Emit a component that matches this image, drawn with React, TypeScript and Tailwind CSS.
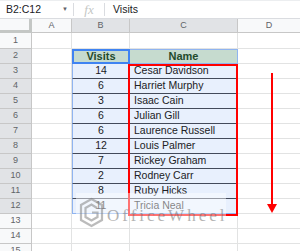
import React from "react";

const rows: [number, string][] = [
  [14, "Cesar Davidson"],
  [6, "Harriet Murphy"],
  [3, "Isaac Cain"],
  [6, "Julian Gill"],
  [6, "Laurence Russell"],
  [12, "Louis Palmer"],
  [7, "Rickey Graham"],
  [2, "Rodney Carr"],
  [8, "Ruby Hicks"],
  [11, "Tricia Neal"],
];

function RowNum({ n, sel, h }: { n: number; sel?: boolean; h: string }) {
  return (
    <div
      className={`w-[32px] shrink-0 ${h} flex items-center justify-center border-r border-b border-[#c7c7c7] text-[9px] text-[#5f6368] ${
        sel ? "bg-[#e1e3e6]" : "bg-[#f8f9fa]"
      }`}
    >
      {n}
    </div>
  );
}

export default function App() {
  return (
    <div
      className="relative w-[300px] h-[251px] overflow-hidden bg-white"
      style={{ fontFamily: '"Liberation Sans", Arial, sans-serif' }}
    >
      {/* formula bar */}
      <div className="h-[19px] flex items-center border-b border-[#dadce0] border-t border-t-[#eceef0]">
        <div className="w-[73px] flex items-center justify-between pl-[6px] pr-[5px] text-[10.5px] text-[#202124]">
          <span>B2:C12</span>
          <span className="text-[6px] text-[#5f6368]">▼</span>
        </div>
        <div className="w-px h-[13px] bg-[#dadce0]" />
        <div className="w-[30px] flex justify-center">
          <span
            className="italic text-[13px] text-[#c4c7c5] leading-none"
            style={{ fontFamily: '"Liberation Serif", serif' }}
          >
            fx
          </span>
        </div>
        <div className="w-px h-[13px] bg-[#dadce0]" />
        <span className="pl-[8px] text-[10.5px] text-[#202124]">Visits</span>
      </div>

      {/* column header */}
      <div className="flex h-[14px]">
        <div className="w-[32px] shrink-0 bg-[#f8f9fa] border-r-[3px] border-b-[3px] border-[#c4c7c5]" />
        <div className="w-[40px] shrink-0 bg-[#f8f9fa] border-r border-b border-[#c7c7c7] flex items-center justify-center text-[9px] text-[#5f6368]">
          A
        </div>
        <div className="w-[58px] shrink-0 bg-[#e1e3e6] border-r border-b border-[#c7c7c7] flex items-center justify-center text-[9px] text-[#5f6368]">
          B
        </div>
        <div className="w-[108px] shrink-0 bg-[#e1e3e6] border-r border-b border-[#c7c7c7] flex items-center justify-center text-[9px] text-[#5f6368]">
          C
        </div>
        <div className="flex-1 bg-[#f8f9fa] border-b border-[#c7c7c7] flex items-center justify-center text-[9px] text-[#5f6368]">
          D
        </div>
      </div>

      {/* row 1 */}
      <div className="flex">
        <RowNum n={1} h="h-[16px]" />
        <div className="w-[40px] h-[16px] border-r border-b border-[#e2e3e3]" />
        <div className="w-[58px] h-[16px] border-r border-b border-[#e2e3e3]" />
        <div className="w-[108px] h-[16px] border-r border-b border-[#e2e3e3]" />
        <div className="flex-1 h-[16px] border-b border-[#e2e3e3]" />
      </div>

      {/* row 2 header */}
      <div className="flex">
        <RowNum n={2} sel h="h-[15px]" />
        <div className="w-[40px] h-[15px] border-r border-b border-[#e2e3e3]" />
        <div className="w-[58px] h-[15px] bg-[#c6dbcf] border-2 border-[#3f83f2] flex items-center justify-center text-[11px] font-bold text-[#234a2c]">
          Visits
        </div>
        <div className="w-[108px] h-[15px] bg-[#c6dbcf] border-t border-r border-b border-[#8fb4f0] flex items-center justify-center text-[11px] font-bold text-[#234a2c]">
          Name
        </div>
        <div className="flex-1 h-[15px] border-b border-[#e2e3e3]" />
      </div>

      {rows.map(([v, name], i) => {
        const last = i === rows.length - 1;
        return (
          <div className="flex" key={name}>
            <RowNum n={i + 3} sel h="h-[15px]" />
            <div className="w-[40px] h-[15px] border-r border-b border-[#e2e3e3]" />
            <div
              className={`w-[58px] h-[15px] bg-[#e8f0fd] border-l border-[#8fb4f0] border-r border-r-[#434a5a] border-b flex items-center justify-center text-[10.5px] text-[#202124] ${
                last ? "border-b-[#8fb4f0]" : "border-b-[#434a5a]"
              }`}
            >
              {v}
            </div>
            <div
              className={`w-[108px] h-[15px] bg-[#e8f0fd] border-r border-[#8fb4f0] border-b flex items-center pl-[4px] text-[10.5px] text-[#202124] ${
                last ? "border-b-[#8fb4f0]" : "border-b-[#434a5a]"
              }`}
            >
              {name}
            </div>
            <div className="flex-1 h-[15px] border-b border-[#e2e3e3]" />
          </div>
        );
      })}

      {[13, 14, 15].map((n) => (
        <div className="flex" key={n}>
          <RowNum n={n} h="h-[15px]" />
          <div className="w-[40px] h-[15px] border-r border-b border-[#e2e3e3]" />
          <div className="w-[58px] h-[15px] border-r border-b border-[#e2e3e3]" />
          <div className="w-[108px] h-[15px] border-r border-b border-[#e2e3e3]" />
          <div className="flex-1 h-[15px] border-b border-[#e2e3e3]" />
        </div>
      ))}

      {/* red rectangle around names */}
      <div className="absolute left-[128px] top-[64px] w-[110px] h-[152px] border-2 border-[#ff0000]" />

      {/* red arrow */}
      <div className="absolute left-[271px] top-[73px] w-[2px] h-[133px] bg-[#ff0000]" />
      <svg className="absolute left-[267px] top-[204px]" width="10" height="10" viewBox="0 0 10 10">
        <polygon points="0,0 10,0 5,9" fill="#ff0000" />
      </svg>

      {/* watermark */}
      <div className="absolute left-[76px] top-[193px] w-[150px] h-[23px] bg-white/45" />
      <div className="absolute left-[79px] top-[197px] flex items-center opacity-50">
        <svg width="25" height="31" viewBox="0 0 25 31">
          <g fill="none" stroke="#7a7a7a" strokeWidth="2.2">
            <polygon points="12.5,2 23,8 23,23 12.5,29 2,23 2,8" />
            <polyline points="18,11 12.5,7.5 6.5,11 6.5,20 12.5,23.5 18.5,20 18.5,15.5 13,15.5" />
          </g>
        </svg>
        <span
          className="ml-[3px] mt-[6px] text-[17px] text-[#6a6a6a] tracking-[3px]"
          style={{ fontFamily: '"Liberation Serif", serif' }}
        >
          OfficeWheel
        </span>
      </div>
    </div>
  );
}
